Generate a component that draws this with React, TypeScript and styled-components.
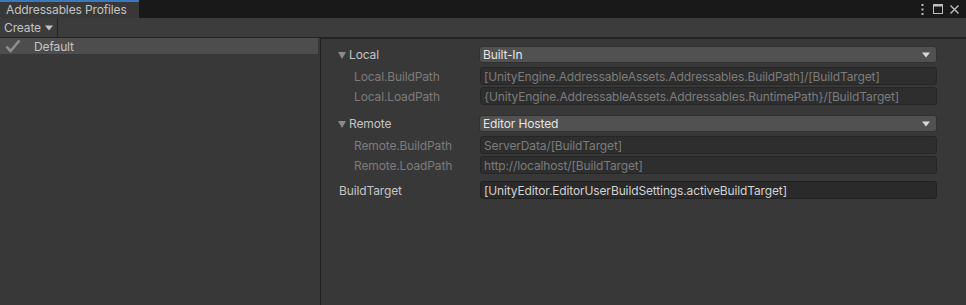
import React from 'react'
import styled, { createGlobalStyle } from 'styled-components'

const GlobalStyle = createGlobalStyle`
  html, body {
    margin: 0;
    padding: 0;
    background: #383838;
  }
  * {
    box-sizing: border-box;
  }
`

const Window = styled.div`
  width: 966px;
  height: 305px;
  display: flex;
  flex-direction: column;
  background: #383838;
  color: #c4c4c4;
  font-family: Inter, 'Noto Sans', sans-serif;
  font-size: 12px;
  letter-spacing: -0.13px;
  overflow: hidden;
`

const TabBar = styled.div`
  height: 18px;
  display: flex;
  align-items: stretch;
  background: #191919;
`

const Tab = styled.div`
  width: 139px;
  display: flex;
  align-items: center;
  padding-left: 6px;
  background: #383838;
  border-top: 2px solid #3a79bb;
  color: #c4c4c4;
  line-height: 1;
`

const TabButtons = styled.div`
  margin-left: auto;
  display: flex;
  align-items: center;
  padding-right: 7px;
`

const IconSlot = styled.span<{ gap: number }>`
  display: flex;
  margin-left: ${p => p.gap}px;
`

const Toolbar = styled.div`
  height: 20px;
  display: flex;
  background: #3c3c3c;
  border-bottom: 1px solid #232323;
`

const ToolbarButton = styled.div`
  width: 58px;
  display: flex;
  align-items: center;
  gap: 4px;
  padding-left: 4px;
  border-right: 1px solid #232323;
  color: #c4c4c4;
`

const Body = styled.div`
  flex: 1;
  display: flex;
  min-height: 0;
`

const ProfileList = styled.div`
  width: 320px;
  padding-right: 2px;
`

const ProfileRow = styled.div<{ selected?: boolean }>`
  height: 16px;
  display: flex;
  align-items: center;
  gap: 13px;
  padding-left: 5px;
  background: ${p => (p.selected ? '#4d4d4d' : 'transparent')};
`

const Inspector = styled.div`
  flex: 1;
  border-left: 1px solid #1e1e1e;
  border-top: 1px solid #232323;
  padding: 7px 29px 0 16px;
  display: flex;
  flex-direction: column;
`

const Group = styled.div`
  display: flex;
  flex-direction: column;
  gap: 2px;
  & + & {
    margin-top: 10px;
  }
`

const Row = styled.div<{ gapAfter?: number }>`
  display: grid;
  grid-template-columns: 142px 1fr;
  align-items: center;
  margin-bottom: ${p => p.gapAfter ?? 0}px;
`

const Label = styled.div<{ sub?: boolean; indent?: number }>`
  display: flex;
  align-items: center;
  gap: 2px;
  padding-left: ${p => p.indent ?? (p.sub ? 17 : 0)}px;
  color: ${p => (p.sub ? '#7c7c7c' : '#c4c4c4')};
  white-space: nowrap;
`

const Dropdown = styled.div`
  height: 17px;
  display: flex;
  align-items: center;
  justify-content: space-between;
  padding: 0 6px 0 3px;
  background: #515151;
  border: 1px solid #303030;
  border-radius: 3px;
  color: #e4e4e4;
`

const Field = styled.div<{ disabled?: boolean }>`
  height: 18px;
  margin-left: 1px;
  display: flex;
  align-items: center;
  padding: 0 3px;
  background: ${p => (p.disabled ? '#2e2e2e' : '#2a2a2a')};
  border: 1px solid ${p => (p.disabled ? '#262626' : '#212121')};
  border-radius: 3px;
  color: ${p => (p.disabled ? '#7c7c7c' : '#d2d2d2')};
  white-space: nowrap;
  overflow: hidden;
`

const Standalone = styled(Row)`
  margin-top: 7px;
`

const Caret = ({ color = '#c4c4c4' }: { color?: string }) => (
  <svg width="8" height="6" viewBox="0 0 8 6">
    <path d="M0 0.5 L8 0.5 L4 5.5 Z" fill={color} />
  </svg>
)

const Foldout = () => (
  <svg width="10" height="10" viewBox="0 0 10 10">
    <path d="M1 2 L9 2 L5 9 Z" fill="#8a8a8a" />
  </svg>
)

const Check = () => (
  <svg width="16" height="14" viewBox="0 0 16 14">
    <path d="M1.5 7.5 L5.5 12 L14.5 1.5" fill="none" stroke="#8e8e8e" strokeWidth="2.6" />
  </svg>
)

const Kebab = () => (
  <svg width="3" height="11" viewBox="0 0 3 11">
    <rect x="0.5" y="0" width="2" height="2" fill="#bdbdbd" />
    <rect x="0.5" y="4.5" width="2" height="2" fill="#bdbdbd" />
    <rect x="0.5" y="9" width="2" height="2" fill="#bdbdbd" />
  </svg>
)

const Maximize = () => (
  <svg width="10" height="10" viewBox="0 0 10 10">
    <rect x="0.5" y="0.5" width="9" height="9" fill="none" stroke="#bdbdbd" />
    <rect x="0.5" y="0.5" width="9" height="2" fill="#bdbdbd" />
  </svg>
)

const Close = () => (
  <svg width="9" height="9" viewBox="0 0 9 9">
    <path d="M0.5 0.5 L8.5 8.5 M8.5 0.5 L0.5 8.5" stroke="#bdbdbd" strokeWidth="1.4" />
  </svg>
)

const groups = [
  {
    name: 'Local',
    mode: 'Built-In',
    paths: [
      ['Local.BuildPath', '[UnityEngine.AddressableAssets.Addressables.BuildPath]/[BuildTarget]'],
      ['Local.LoadPath', '{UnityEngine.AddressableAssets.Addressables.RuntimePath}/[BuildTarget]'],
    ],
  },
  {
    name: 'Remote',
    mode: 'Editor Hosted',
    paths: [
      ['Remote.BuildPath', 'ServerData/[BuildTarget]'],
      ['Remote.LoadPath', 'http://localhost/[BuildTarget]'],
    ],
  },
]

export default function App() {
  return (
    <Window>
      <GlobalStyle />
      <TabBar>
        <Tab>Addressables Profiles</Tab>
        <TabButtons>
          <Kebab />
          <IconSlot gap={9}>
            <Maximize />
          </IconSlot>
          <IconSlot gap={7}>
            <Close />
          </IconSlot>
        </TabButtons>
      </TabBar>
      <Toolbar>
        <ToolbarButton>
          Create
          <Caret />
        </ToolbarButton>
      </Toolbar>
      <Body>
        <ProfileList>
          <ProfileRow selected>
            <Check />
            Default
          </ProfileRow>
        </ProfileList>
        <Inspector>
          {groups.map(g => (
            <Group key={g.name}>
              <Row gapAfter={2}>
                <Label>
                  <Foldout />
                  {g.name}
                </Label>
                <Dropdown>
                  {g.mode}
                  <Caret color="#d8d8d8" />
                </Dropdown>
              </Row>
              {g.paths.map(([label, value]) => (
                <Row key={label}>
                  <Label sub>{label}</Label>
                  <Field disabled>{value}</Field>
                </Row>
              ))}
            </Group>
          ))}
          <Standalone>
            <Label indent={2}>BuildTarget</Label>
            <Field>[UnityEditor.EditorUserBuildSettings.activeBuildTarget]</Field>
          </Standalone>
        </Inspector>
      </Body>
    </Window>
  )
}
